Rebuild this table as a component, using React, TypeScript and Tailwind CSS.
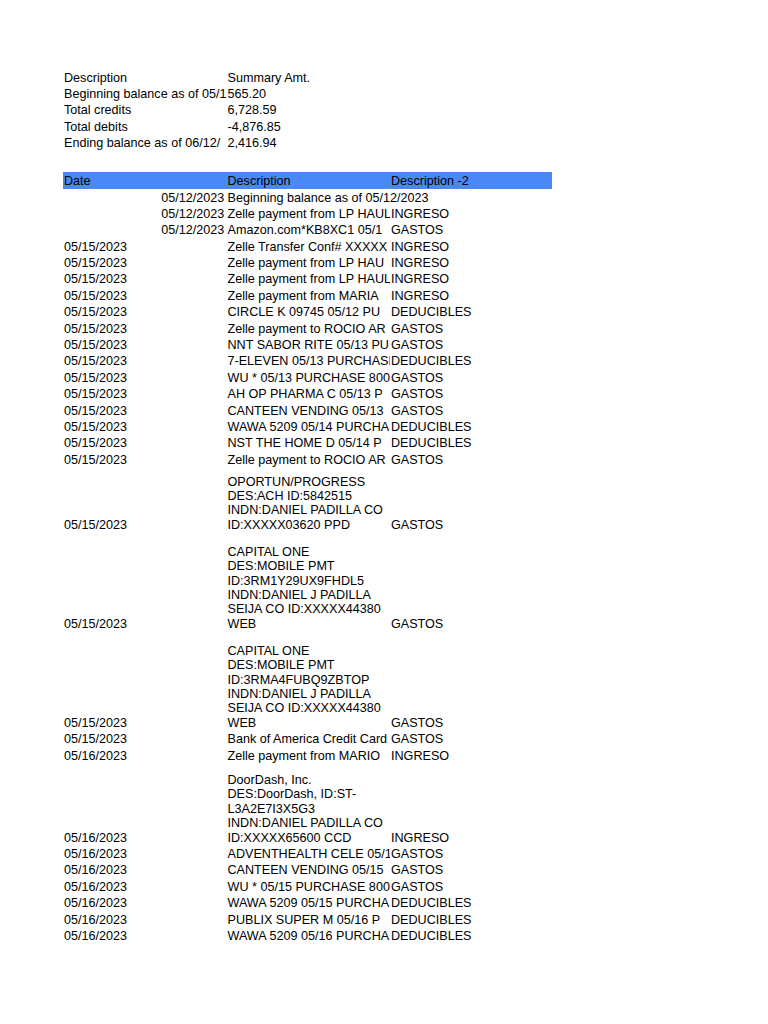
type Row = {
  date: string;
  right?: boolean;
  desc: string[];
  cat: string;
  h?: string;
  spill?: boolean;
};

// hojas exportadas: filas de 16.4px, celdas con texto multilínea alineadas abajo
const rows: Row[] = [
  { date: '05/12/2023', right: true, desc: ['Beginning balance as of 05/12/2023'], cat: '', spill: true },
  { date: '05/12/2023', right: true, desc: ['Zelle payment from LP HAULING'], cat: 'INGRESO' },
  { date: '05/12/2023', right: true, desc: ['Amazon.com*KB8XC1 05/1'], cat: 'GASTOS' },
  { date: '05/15/2023', desc: ['Zelle Transfer Conf# XXXXX'], cat: 'INGRESO' },
  { date: '05/15/2023', desc: ['Zelle payment from LP HAU'], cat: 'INGRESO' },
  { date: '05/15/2023', desc: ['Zelle payment from LP HAULING'], cat: 'INGRESO' },
  { date: '05/15/2023', desc: ['Zelle payment from MARIA'], cat: 'INGRESO' },
  { date: '05/15/2023', desc: ['CIRCLE K 09745 05/12 PU'], cat: 'DEDUCIBLES' },
  { date: '05/15/2023', desc: ['Zelle payment to ROCIO AR'], cat: 'GASTOS' },
  { date: '05/15/2023', desc: ['NNT SABOR RITE 05/13 PURCHASE'], cat: 'GASTOS' },
  { date: '05/15/2023', desc: ['7-ELEVEN 05/13 PURCHASE'], cat: 'DEDUCIBLES' },
  { date: '05/15/2023', desc: ['WU * 05/13 PURCHASE 8002'], cat: 'GASTOS' },
  { date: '05/15/2023', desc: ['AH OP PHARMA C 05/13 P'], cat: 'GASTOS' },
  { date: '05/15/2023', desc: ['CANTEEN VENDING 05/13'], cat: 'GASTOS' },
  { date: '05/15/2023', desc: ['WAWA 5209 05/14 PURCHASE'], cat: 'DEDUCIBLES' },
  { date: '05/15/2023', desc: ['NST THE HOME D 05/14 P'], cat: 'DEDUCIBLES' },
  { date: '05/15/2023', desc: ['Zelle payment to ROCIO AR'], cat: 'GASTOS' },
  {
    date: '05/15/2023',
    desc: ['OPORTUN/PROGRESS', 'DES:ACH ID:5842515', 'INDN:DANIEL PADILLA CO', 'ID:XXXXX03620 PPD'],
    cat: 'GASTOS',
    h: 'h-[65px]',
  },
  {
    date: '05/15/2023',
    desc: ['CAPITAL ONE', 'DES:MOBILE PMT', 'ID:3RM1Y29UX9FHDL5', 'INDN:DANIEL J PADILLA', 'SEIJA CO ID:XXXXX44380', 'WEB'],
    cat: 'GASTOS',
    h: 'h-[99px]',
  },
  {
    date: '05/15/2023',
    desc: ['CAPITAL ONE', 'DES:MOBILE PMT', 'ID:3RMA4FUBQ9ZBTOP', 'INDN:DANIEL J PADILLA', 'SEIJA CO ID:XXXXX44380', 'WEB'],
    cat: 'GASTOS',
    h: 'h-[99px]',
  },
  { date: '05/15/2023', desc: ['Bank of America Credit Card'], cat: 'GASTOS' },
  { date: '05/16/2023', desc: ['Zelle payment from MARIO'], cat: 'INGRESO' },
  {
    date: '05/16/2023',
    desc: ['DoorDash, Inc.', 'DES:DoorDash, ID:ST-', 'L3A2E7I3X5G3', 'INDN:DANIEL PADILLA CO', 'ID:XXXXX65600 CCD'],
    cat: 'INGRESO',
    h: 'h-[82px]',
  },
  { date: '05/16/2023', desc: ['ADVENTHEALTH CELE 05/15'], cat: 'GASTOS' },
  { date: '05/16/2023', desc: ['CANTEEN VENDING 05/15'], cat: 'GASTOS' },
  { date: '05/16/2023', desc: ['WU * 05/15 PURCHASE 8002'], cat: 'GASTOS' },
  { date: '05/16/2023', desc: ['WAWA 5209 05/15 PURCHASE'], cat: 'DEDUCIBLES' },
  { date: '05/16/2023', desc: ['PUBLIX SUPER M 05/16 P'], cat: 'DEDUCIBLES' },
  { date: '05/16/2023', desc: ['WAWA 5209 05/16 PURCHASE'], cat: 'DEDUCIBLES' },
];

const summary: [string, string][] = [
  ['Description', 'Summary Amt.'],
  ['Beginning balance as of 05/12/2023', '565.20'],
  ['Total credits', '6,728.59'],
  ['Total debits', '-4,876.85'],
  ['Ending balance as of 06/12/', '2,416.94'],
];

export default function App() {
  return (
    <div
      className="min-h-screen w-full bg-white pl-[63px] pt-[68.6px] text-[12.6px] leading-[14.4px] text-black"
      style={{ fontFamily: '"Liberation Sans", Arial, sans-serif' }}
    >
      <div className="flex flex-col">
        {summary.map(([label, amt]) => (
          <div key={label} className="flex h-[16.4px] items-end">
            <div className="w-[163px] overflow-hidden whitespace-nowrap pl-[1px]">{label}</div>
            <div className="w-[164px] whitespace-nowrap pl-[1.5px]">{amt}</div>
          </div>
        ))}
      </div>

      <div className="mt-[21.6px] flex w-[489px] flex-col">
        <div className="flex h-[16.4px] items-end bg-[#4a89f5]">
          <div className="w-[163px] pl-[1px]">Date</div>
          <div className="w-[164px] pl-[1.5px]">Description</div>
          <div className="w-[162px] pl-[1px]">Description -2</div>
        </div>
        {rows.map((r, i) => (
          <div key={i} className={`flex items-end ${r.h ?? 'h-[16.4px]'}`}>
            <div className={`w-[163px] shrink-0 whitespace-nowrap pl-[1px] pr-[1.7px] ${r.right ? 'text-right' : ''}`}>
              {r.date}
            </div>
            <div
              className={`w-[164px] shrink-0 whitespace-nowrap pl-[1.5px] ${r.spill ? 'overflow-visible' : 'overflow-hidden'}`}
            >
              {r.desc.map((line) => (
                <div key={line}>{line}</div>
              ))}
            </div>
            <div className="w-[162px] shrink-0 whitespace-nowrap pl-[1px]">{r.cat}</div>
          </div>
        ))}
      </div>
    </div>
  );
}
